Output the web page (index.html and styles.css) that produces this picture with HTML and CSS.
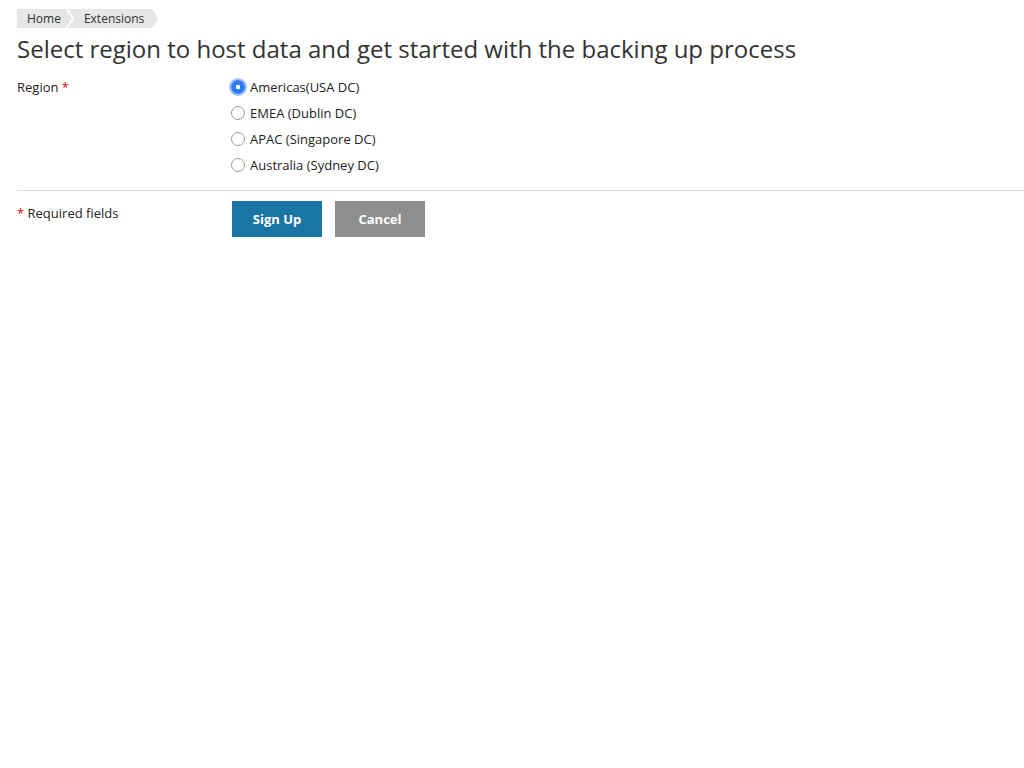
FILE: index.html
```html
<!DOCTYPE html>
<html>
<head>
<meta charset="utf-8">
<link rel="stylesheet" href="styles.css">
</head>
<body>
<div class="page">
  <nav class="crumbs">
    <span class="crumb first">Home</span>
    <span class="crumb">Extensions</span>
  </nav>
  <h1 class="title">Select region to host data and get started with the backing up process</h1>
  <form class="form">
    <div class="row">
      <div class="label">Region <span class="req">*</span></div>
      <div class="options">
        <label class="opt"><input type="radio" name="region" checked><span>Americas(USA DC)</span></label>
        <label class="opt"><input type="radio" name="region"><span>EMEA (Dublin DC)</span></label>
        <label class="opt"><input type="radio" name="region"><span>APAC (Singapore DC)</span></label>
        <label class="opt"><input type="radio" name="region"><span>Australia (Sydney DC)</span></label>
      </div>
    </div>
    <div class="footer">
      <div class="label"><span class="req">*</span> Required fields</div>
      <div class="buttons">
        <button type="button" class="btn primary">Sign Up</button>
        <button type="button" class="btn secondary">Cancel</button>
      </div>
    </div>
  </form>
</div>
</body>
</html>
```
FILE: styles.css
```css
html, body {
  margin: 0;
  padding: 0;
  background: #fff;
}
body {
  font-family: "Open Sans", "DejaVu Sans", sans-serif;
  font-size: 13px;
  color: #222;
}
.page {
  padding: 9px 0 0 17px;
}
.crumbs {
  display: flex;
  height: 19px;
}
.crumb {
  display: flex;
  align-items: center;
  height: 19px;
  background: #e6e6e6;
  color: #333;
  font-size: 12px;
  padding: 0 14px 0 16px;
  margin-left: -4px;
  clip-path: polygon(0 0, calc(100% - 6px) 0, 100% 50%, calc(100% - 6px) 100%, 0 100%, 6px 50%);
}
.crumb.first {
  margin-left: 0;
  padding-left: 10px;
  padding-right: 11px;
  clip-path: polygon(0 0, calc(100% - 6px) 0, 100% 50%, calc(100% - 6px) 100%, 0 100%);
}
.title {
  margin: 5px 0 0 0;
  font-size: 24px;
  line-height: 32px;
  font-weight: 400;
  color: #333;
}
.form {
  margin-top: 9px;
}
.row {
  display: flex;
  padding-bottom: 12px;
  border-bottom: 1px solid #ddd;
}
.label {
  width: 214px;
  flex: none;
  line-height: 26px;
}
.req {
  color: #d00;
}
.options {
  display: flex;
  flex-direction: column;
}
.opt {
  display: flex;
  align-items: center;
  height: 26px;
}
.opt input {
  appearance: none;
  -webkit-appearance: none;
  width: 14px;
  height: 14px;
  margin: 0 5px 0 0;
  border: 1px solid #9a9a9a;
  border-radius: 50%;
  background: #fff;
  box-sizing: border-box;
}
.opt input:checked {
  border: none;
  background: radial-gradient(circle, #fff 0 2px, #2f7df6 2.5px);
  box-shadow: 0 0 0 2px rgba(70, 130, 240, 0.5);
}
.footer {
  display: flex;
  padding-top: 10px;
}
.footer .label {
  line-height: 24px;
  width: 215px;
}
.buttons {
  display: flex;
  gap: 13px;
}
.btn {
  width: 90px;
  height: 36px;
  border: none;
  padding: 0;
  font-family: "Open Sans", "DejaVu Sans", sans-serif;
  font-size: 13px;
  font-weight: 700;
  color: #fff;
  cursor: pointer;
}
.primary {
  background: #1a75a5;
}
.secondary {
  background: #8e8e8e;
}
```
